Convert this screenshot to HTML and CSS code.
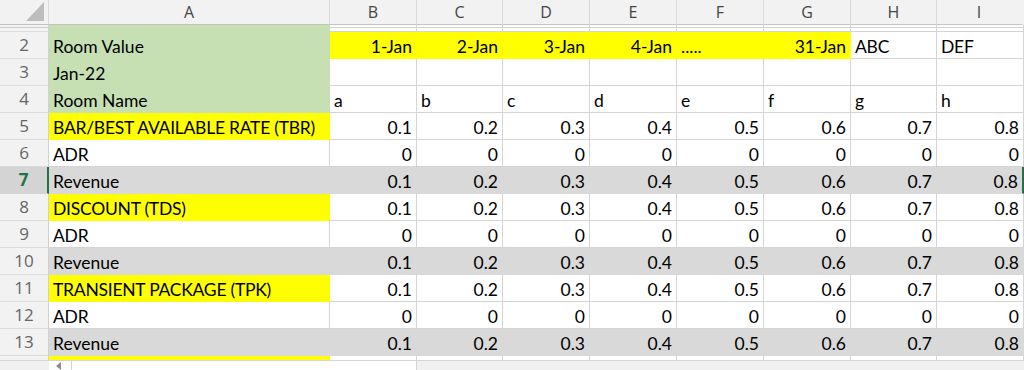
FILE: index.html
```html
<!DOCTYPE html>
<html lang="en">
<head>
    <meta charset="UTF-8">
    <meta name="viewport" content="width=device-width, initial-scale=1.0">
    <title>Room Value</title>
<link rel="stylesheet" href="styles.css">
</head>
<body>
    <div class="sheet">
        <div class="row head">
            <div class="cell corner"><span class="tri"></span></div>
            <div class="cell">A</div>
            <div class="cell">B</div>
            <div class="cell">C</div>
            <div class="cell">D</div>
            <div class="cell">E</div>
            <div class="cell">F</div>
            <div class="cell">G</div>
            <div class="cell">H</div>
            <div class="cell">I</div>
        </div>
        <!-- row 1 is hidden -->
        <div class="row hid">
            <div class="cell rh"></div>
            <div class="cell green"></div>
            <div class="cell"></div><div class="cell"></div><div class="cell"></div><div class="cell"></div>
            <div class="cell"></div><div class="cell"></div><div class="cell"></div><div class="cell"></div>
        </div>
        <div class="row">
            <div class="cell rh">2</div>
            <div class="cell green">Room Value</div>
            <div class="cell yellow num">1-Jan</div>
            <div class="cell yellow num">2-Jan</div>
            <div class="cell yellow num">3-Jan</div>
            <div class="cell yellow num">4-Jan</div>
            <div class="cell yellow">.....</div>
            <div class="cell yellow num">31-Jan</div>
            <div class="cell caps">ABC</div>
            <div class="cell caps">DEF</div>
        </div>
        <div class="row">
            <div class="cell rh">3</div>
            <div class="cell green">Jan-22</div>
            <div class="cell"></div><div class="cell"></div><div class="cell"></div><div class="cell"></div>
            <div class="cell"></div><div class="cell"></div><div class="cell"></div><div class="cell"></div>
        </div>
        <div class="row">
            <div class="cell rh">4</div>
            <div class="cell green">Room Name</div>
            <div class="cell">a</div>
            <div class="cell">b</div>
            <div class="cell">c</div>
            <div class="cell">d</div>
            <div class="cell">e</div>
            <div class="cell">f</div>
            <div class="cell">g</div>
            <div class="cell">h</div>
        </div>
        <div class="row">
            <div class="cell rh">5</div>
            <div class="cell yellow caps">BAR/BEST AVAILABLE RATE (TBR)</div>
            <div class="cell num">0.1</div><div class="cell num">0.2</div><div class="cell num">0.3</div><div class="cell num">0.4</div>
            <div class="cell num">0.5</div><div class="cell num">0.6</div><div class="cell num">0.7</div><div class="cell num">0.8</div>
        </div>
        <div class="row">
            <div class="cell rh">6</div>
            <div class="cell caps">ADR</div>
            <div class="cell num">0</div><div class="cell num">0</div><div class="cell num">0</div><div class="cell num">0</div>
            <div class="cell num">0</div><div class="cell num">0</div><div class="cell num">0</div><div class="cell num">0</div>
        </div>
        <div class="row total sel">
            <div class="cell rh">7</div>
            <div class="cell">Revenue</div>
            <div class="cell num">0.1</div><div class="cell num">0.2</div><div class="cell num">0.3</div><div class="cell num">0.4</div>
            <div class="cell num">0.5</div><div class="cell num">0.6</div><div class="cell num">0.7</div><div class="cell num">0.8</div>
        </div>
        <div class="row">
            <div class="cell rh">8</div>
            <div class="cell yellow caps">DISCOUNT (TDS)</div>
            <div class="cell num">0.1</div><div class="cell num">0.2</div><div class="cell num">0.3</div><div class="cell num">0.4</div>
            <div class="cell num">0.5</div><div class="cell num">0.6</div><div class="cell num">0.7</div><div class="cell num">0.8</div>
        </div>
        <div class="row">
            <div class="cell rh">9</div>
            <div class="cell caps">ADR</div>
            <div class="cell num">0</div><div class="cell num">0</div><div class="cell num">0</div><div class="cell num">0</div>
            <div class="cell num">0</div><div class="cell num">0</div><div class="cell num">0</div><div class="cell num">0</div>
        </div>
        <div class="row total">
            <div class="cell rh">10</div>
            <div class="cell">Revenue</div>
            <div class="cell num">0.1</div><div class="cell num">0.2</div><div class="cell num">0.3</div><div class="cell num">0.4</div>
            <div class="cell num">0.5</div><div class="cell num">0.6</div><div class="cell num">0.7</div><div class="cell num">0.8</div>
        </div>
        <div class="row">
            <div class="cell rh">11</div>
            <div class="cell yellow caps">TRANSIENT PACKAGE (TPK)</div>
            <div class="cell num">0.1</div><div class="cell num">0.2</div><div class="cell num">0.3</div><div class="cell num">0.4</div>
            <div class="cell num">0.5</div><div class="cell num">0.6</div><div class="cell num">0.7</div><div class="cell num">0.8</div>
        </div>
        <div class="row">
            <div class="cell rh">12</div>
            <div class="cell caps">ADR</div>
            <div class="cell num">0</div><div class="cell num">0</div><div class="cell num">0</div><div class="cell num">0</div>
            <div class="cell num">0</div><div class="cell num">0</div><div class="cell num">0</div><div class="cell num">0</div>
        </div>
        <div class="row total">
            <div class="cell rh">13</div>
            <div class="cell">Revenue</div>
            <div class="cell num">0.1</div><div class="cell num">0.2</div><div class="cell num">0.3</div><div class="cell num">0.4</div>
            <div class="cell num">0.5</div><div class="cell num">0.6</div><div class="cell num">0.7</div><div class="cell num">0.8</div>
        </div>
        <!-- row 14, cut off by the scrollbar -->
        <div class="row cut">
            <div class="cell rh"></div>
            <div class="cell yellow"></div>
            <div class="cell"></div><div class="cell"></div><div class="cell"></div><div class="cell"></div>
            <div class="cell"></div><div class="cell"></div><div class="cell"></div><div class="cell"></div>
        </div>
        <div class="hscroll">
            <div class="hs-gap"></div>
            <div class="hs-arrow"><span class="arrow-left"></span></div>
            <div class="hs-thumb"></div>
            <div class="hs-rest"></div>
        </div>
    </div>
</body>
</html>
```

FILE: styles.css
```css
body{
    margin: 0;
    background: #fff;
    font-family: Lato, "Open Sans", sans-serif;
    overflow: hidden;
}
.sheet{
    width: 1024px;
    height: 370px;
    display: flex;
    flex-direction: column;
    overflow: hidden;
}
.row{
    display: grid;
    grid-template-columns: 49px 281px 87px 86px 87px 87px 87px 87px 86px 87px;
    height: 27px;
    flex: none;
}
.cell{
    box-sizing: border-box;
    display: flex;
    align-items: flex-end;
    padding: 0 4px 1px;
    border-right: 1px solid #d4d4d4;
    border-bottom: 1px solid #d4d4d4;
    font-size: 17.5px;
    line-height: 20px;
    color: #000;
    white-space: nowrap;
    overflow: hidden;
}
.caps{
    letter-spacing: -0.25px;
}
.num{
    justify-content: flex-end;
}
.green{
    background: #c6e0b4;
    border-color: #c6e0b4;
}
.yellow{
    background: #ffff00;
    border-color: #ffff00;
}
.total .cell{
    background: #d9d9d9;
    border-color: #d9d9d9;
}

/* column letters */
.head{
    height: 25px;
}
.head .cell{
    background: #f2f2f2;
    border-right-color: #dadada;
    border-bottom-color: #c4c4c4;
    justify-content: center;
    align-items: center;
    padding: 0;
    font-family: "Open Sans", sans-serif;
    font-size: 16px;
    color: #444;
}
.head .corner{
    justify-content: flex-end;
    align-items: flex-end;
    padding: 0 4px 3px 0;
}
.tri{
    width: 0;
    height: 0;
    border-left: 18px solid transparent;
    border-bottom: 19px solid #bdbdbd;
}
.head .cell:last-child{
    border-right: 3px solid #f2f2f2;
}

/* row numbers */
.rh{
    background: #f2f2f2;
    border-right-color: #d0d0d0;
    border-bottom-color: #dcdcdc;
    justify-content: center;
    align-items: center;
    padding: 0;
    font-family: "Open Sans", sans-serif;
    font-size: 17px;
    color: #666;
}
.total .rh{
    background: #f2f2f2;
    border-right-color: #d0d0d0;
    border-bottom-color: #dcdcdc;
}
.sel .rh{
    background: #d4d4d4;
    border-right: 2px solid #217346;
    border-bottom-color: #d4d4d4;
    color: #217346;
    font-weight: bold;
}
.sel .cell:last-child{
    border-right: 2px solid #217346;
}

/* hidden row 1 shows as a double line */
.hid{
    height: 7px;
}
.hid .cell{
    padding: 0;
    box-shadow: inset 0 2px 0 #fff, inset 0 3px 0 #d4d4d4;
}
.hid .rh{
    box-shadow: inset 0 2px 0 #f2f2f2, inset 0 3px 0 #d0d0d0;
}
.hid .green{
    box-shadow: none;
}

.cut{
    height: 4px;
}
.cut .cell{
    border-bottom: none;
}

.hscroll{
    flex: none;
    display: flex;
    height: 10px;
    background: #f0f0f0;
    border-top: 1px solid #d4d4d4;
    box-sizing: border-box;
}
.hs-gap{
    width: 49px;
}
.hs-arrow{
    width: 23px;
    display: flex;
    justify-content: center;
    align-items: flex-end;
    padding-right: 4px;
    background: #fff;
    border-right: 1px solid #d4d4d4;
    box-sizing: border-box;
}
.arrow-left{
    width: 0;
    height: 0;
    border-top: 4px solid transparent;
    border-bottom: 4px solid transparent;
    border-right: 5px solid #8a8a8a;
}
.hs-thumb{
    width: 344px;
    background: #fff;
    border-right: 1px solid #d4d4d4;
}
.hs-rest{
    flex: 1;
}
```
